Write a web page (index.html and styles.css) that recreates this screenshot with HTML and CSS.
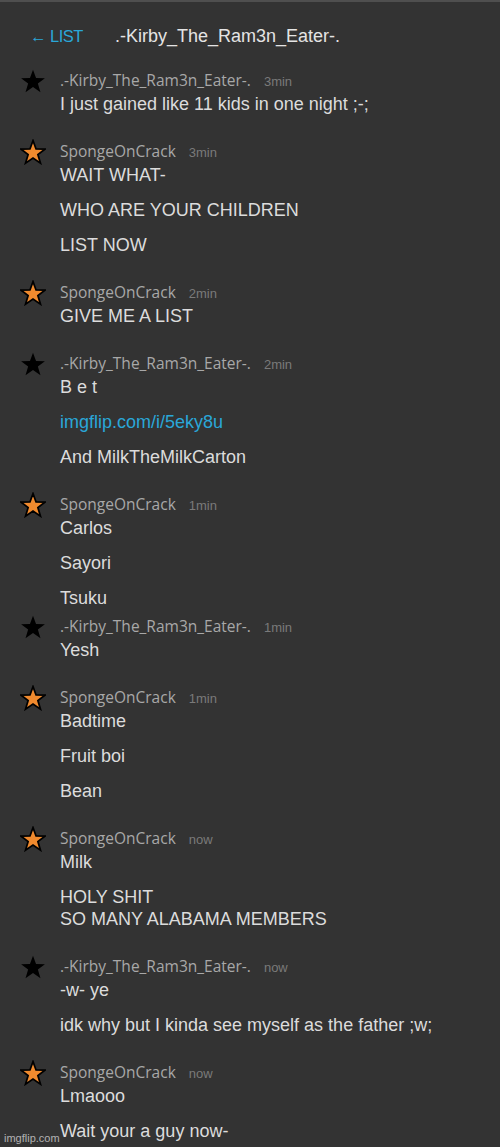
FILE: index.html
```html
<!DOCTYPE html>
<html>
<head>
<meta charset="utf-8">
<link rel="stylesheet" href="styles.css">
</head>
<body>
<div class="page">
  <div class="header">
    <span class="back">← LIST</span>
    <span class="title">.-Kirby_The_Ram3n_Eater-.</span>
  </div>

  <div class="msg">
    <svg class="star" viewBox="0 0 24 24"><polygon class="black" points="12,1.5 14.8,9.2 23,9.4 16.5,14.4 18.9,22.3 12,17.6 5.1,22.3 7.5,14.4 1,9.4 9.2,9.2"/></svg>
    <div class="body">
      <div class="meta"><span class="name">.-Kirby_The_Ram3n_Eater-.</span><span class="time">3min</span></div>
      <p>I just gained like 11 kids in one night ;-;</p>
    </div>
  </div>

  <div class="msg">
    <svg class="star" viewBox="0 0 24 24"><polygon class="orange" points="12,1.5 14.8,9.2 23,9.4 16.5,14.4 18.9,22.3 12,17.6 5.1,22.3 7.5,14.4 1,9.4 9.2,9.2"/></svg>
    <div class="body">
      <div class="meta"><span class="name">SpongeOnCrack</span><span class="time">3min</span></div>
      <p>WAIT WHAT-</p>
      <p>WHO ARE YOUR CHILDREN</p>
      <p>LIST NOW</p>
    </div>
  </div>

  <div class="msg">
    <svg class="star" viewBox="0 0 24 24"><polygon class="orange" points="12,1.5 14.8,9.2 23,9.4 16.5,14.4 18.9,22.3 12,17.6 5.1,22.3 7.5,14.4 1,9.4 9.2,9.2"/></svg>
    <div class="body">
      <div class="meta"><span class="name">SpongeOnCrack</span><span class="time">2min</span></div>
      <p>GIVE ME A LIST</p>
    </div>
  </div>

  <div class="msg">
    <svg class="star" viewBox="0 0 24 24"><polygon class="black" points="12,1.5 14.8,9.2 23,9.4 16.5,14.4 18.9,22.3 12,17.6 5.1,22.3 7.5,14.4 1,9.4 9.2,9.2"/></svg>
    <div class="body">
      <div class="meta"><span class="name">.-Kirby_The_Ram3n_Eater-.</span><span class="time">2min</span></div>
      <p>B e t</p>
      <p><span class="link">imgflip.com/i/5eky8u</span></p>
      <p>And MilkTheMilkCarton</p>
    </div>
  </div>

  <div class="msg">
    <svg class="star" viewBox="0 0 24 24"><polygon class="orange" points="12,1.5 14.8,9.2 23,9.4 16.5,14.4 18.9,22.3 12,17.6 5.1,22.3 7.5,14.4 1,9.4 9.2,9.2"/></svg>
    <div class="body">
      <div class="meta"><span class="name">SpongeOnCrack</span><span class="time">1min</span></div>
      <p>Carlos</p>
      <p>Sayori</p>
      <p>Tsuku</p>
    </div>
  </div>

  <div class="msg tight">
    <svg class="star" viewBox="0 0 24 24"><polygon class="black" points="12,1.5 14.8,9.2 23,9.4 16.5,14.4 18.9,22.3 12,17.6 5.1,22.3 7.5,14.4 1,9.4 9.2,9.2"/></svg>
    <div class="body">
      <div class="meta"><span class="name">.-Kirby_The_Ram3n_Eater-.</span><span class="time">1min</span></div>
      <p>Yesh</p>
    </div>
  </div>

  <div class="msg">
    <svg class="star" viewBox="0 0 24 24"><polygon class="orange" points="12,1.5 14.8,9.2 23,9.4 16.5,14.4 18.9,22.3 12,17.6 5.1,22.3 7.5,14.4 1,9.4 9.2,9.2"/></svg>
    <div class="body">
      <div class="meta"><span class="name">SpongeOnCrack</span><span class="time">1min</span></div>
      <p>Badtime</p>
      <p>Fruit boi</p>
      <p>Bean</p>
    </div>
  </div>

  <div class="msg">
    <svg class="star" viewBox="0 0 24 24"><polygon class="orange" points="12,1.5 14.8,9.2 23,9.4 16.5,14.4 18.9,22.3 12,17.6 5.1,22.3 7.5,14.4 1,9.4 9.2,9.2"/></svg>
    <div class="body">
      <div class="meta"><span class="name">SpongeOnCrack</span><span class="time">now</span></div>
      <p>Milk</p>
      <p>HOLY SHIT<br>SO MANY ALABAMA MEMBERS</p>
    </div>
  </div>

  <div class="msg">
    <svg class="star" viewBox="0 0 24 24"><polygon class="black" points="12,1.5 14.8,9.2 23,9.4 16.5,14.4 18.9,22.3 12,17.6 5.1,22.3 7.5,14.4 1,9.4 9.2,9.2"/></svg>
    <div class="body">
      <div class="meta"><span class="name">.-Kirby_The_Ram3n_Eater-.</span><span class="time">now</span></div>
      <p>-w- ye</p>
      <p>idk why but I kinda see myself as the father ;w;</p>
    </div>
  </div>

  <div class="msg">
    <svg class="star" viewBox="0 0 24 24"><polygon class="orange" points="12,1.5 14.8,9.2 23,9.4 16.5,14.4 18.9,22.3 12,17.6 5.1,22.3 7.5,14.4 1,9.4 9.2,9.2"/></svg>
    <div class="body">
      <div class="meta"><span class="name">SpongeOnCrack</span><span class="time">now</span></div>
      <p>Lmaooo</p>
      <p>Wait your a guy now-</p>
    </div>
  </div>

  <div class="watermark">imgflip.com</div>
</div>
</body>
</html>
```

FILE: styles.css
```css
html, body {
  margin: 0;
  padding: 0;
  background: #333333;
}

.page {
  position: relative;
  height: 1147px;
  box-sizing: border-box;
  border-top: 2px solid #4f4f4f;
  background: #333333;
  font-family: "Liberation Sans", Arial, sans-serif;
  color: #dcdcdc;
  overflow: hidden;
}

.header {
  display: flex;
  align-items: center;
  gap: 32px;
  padding: 22px 0 0 30px;
  height: 24px;
  line-height: 24px;
}

.back {
  color: #2aa7d8;
  font-size: 16.5px;
  letter-spacing: -0.5px;
}

.title {
  color: #e4e4e4;
  font-size: 18px;
}

.msg {
  display: flex;
  margin-top: 24px;
}

.header + .msg {
  margin-top: 20px;
}

.msg.tight {
  margin-top: 5px;
}

.star {
  width: 26px;
  height: 26px;
  margin: 0 14px 0 20px;
  flex: none;
}

.star .black {
  fill: #000;
}

.star .orange {
  fill: #f08a2e;
  stroke: #000;
  stroke-width: 1.6;
  stroke-linejoin: miter;
}

.body {
  flex: 1;
}

.meta {
  height: 25px;
  line-height: 24px;
  display: flex;
  align-items: baseline;
  gap: 13px;
}

.name {
  font-family: "Open Sans", "DejaVu Sans", sans-serif;
  font-size: 15.5px;
  color: #a8a8a8;
}

.time {
  font-size: 13px;
  color: #7a7a7a;
}

.body p {
  margin: 13px 0 0;
  font-size: 18px;
  line-height: 22px;
}

.body .meta + p {
  margin-top: 0;
}

.link {
  color: #2aa7d8;
}

.watermark {
  position: absolute;
  left: 4px;
  bottom: 3px;
  font-size: 11px;
  color: #c8c8c8;
  opacity: 0.85;
}
```
